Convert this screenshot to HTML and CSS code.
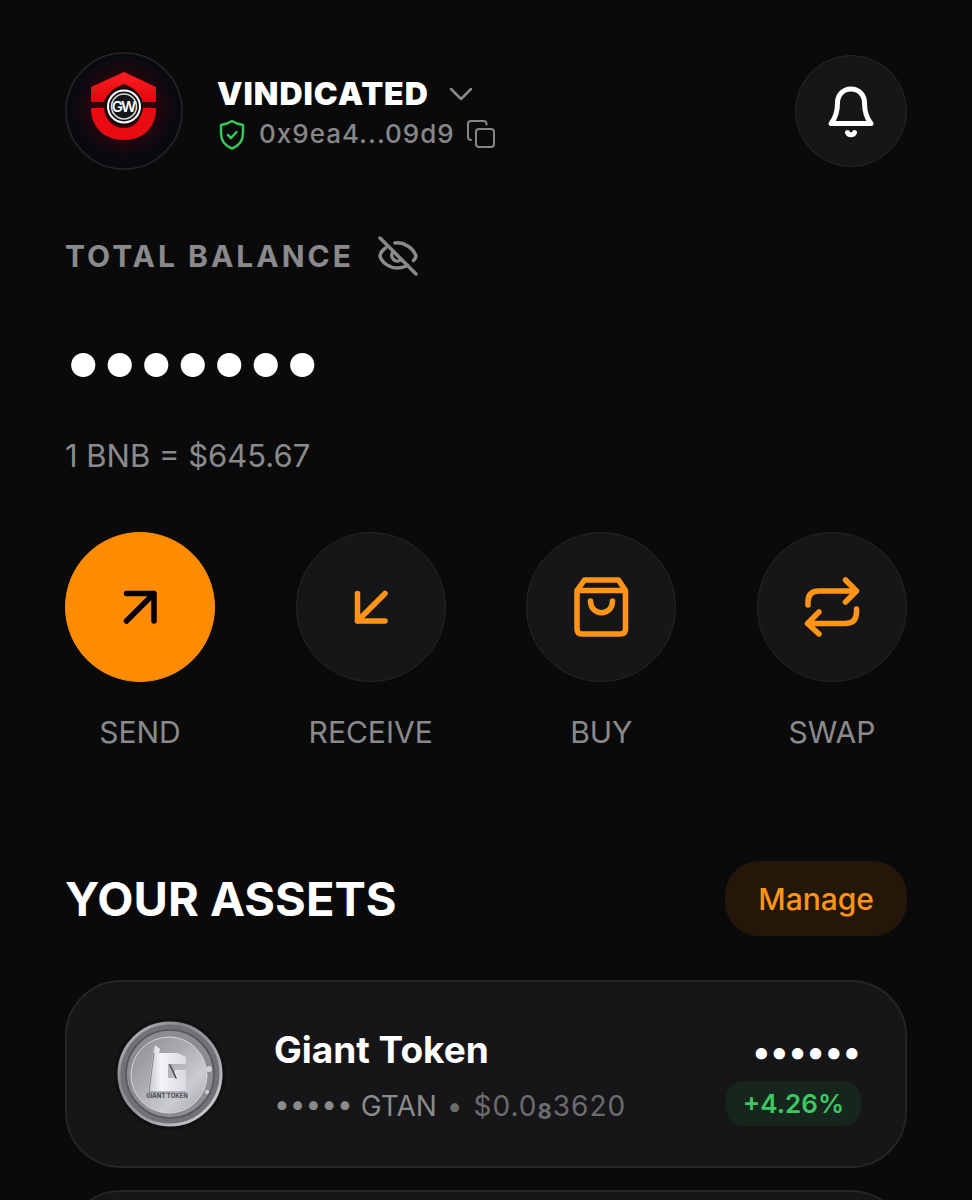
FILE: index.html
```html
<!DOCTYPE html>
<html lang="en">
<head>
  <meta charset="UTF-8" />
  <meta name="viewport" content="width=device-width, initial-scale=1.0" />
  <title>Wallet</title>
  <link rel="stylesheet" href="styles.css">
</head>
<body>
  <header class="topbar">
    <svg class="avatar" viewBox="0 0 118 118" role="img" aria-label="Avatar">
      <defs>
        <radialGradient id="avatar-glow">
          <stop offset="0" stop-color="#5c050c" />
          <stop offset=".55" stop-color="#28060d" />
          <stop offset="1" stop-color="#0a0910" />
        </radialGradient>
        <linearGradient id="avatar-red" x1="0" y1="0" x2="0" y2="1">
          <stop offset="0" stop-color="#ff1d1f" />
          <stop offset="1" stop-color="#dc080e" />
        </linearGradient>
      </defs>
      <circle cx="59" cy="59" r="58" fill="#0a0910" stroke="#27272a" stroke-width="1.5" />
      <circle cx="59" cy="55" r="51" fill="url(#avatar-glow)" />
      <path d="M26 35L59 20L91 35V50H77C76 43 70 36 59 32C48 36 41 43 39 50H26Z" fill="url(#avatar-red)" />
      <path d="M26 56H39C40 68 48 76 59 76S76 68 77 56H91C91 76 78 88 59 88S26 76 26 56Z" fill="#e80b12" />
      <circle cx="59" cy="54.500" r="19" fill="#10080d" />
      <circle cx="59" cy="54.500" r="16" fill="#15151a" stroke="#fff" stroke-width="2" />
      <circle cx="59" cy="54.500" r="12.500" fill="none" stroke="#ddd" stroke-width="1.5" />
      <text class="avatar-text" x="58" y="60" text-anchor="middle">GW</text>
    </svg>

    <div class="account">
      <button class="account-name" type="button">
        VINDICATED
        <svg class="chevron" viewBox="0 0 24 24"><path d="M2 7l10 10 10-10" /></svg>
      </button>
      <div class="address">
        <svg class="shield" viewBox="0 0 30 32">
          <path d="M15 3C12 5 8 6.500 4 7V15C4 22.500 8.500 28 15 30.500C21.500 28 26 22.500 26 15V7C22 6.500 18 5 15 3Z" />
          <path d="M11 17l3 3 5.500-6" />
        </svg>
        <span>0x9ea4...09d9</span>
        <button class="icon-btn" type="button" aria-label="Copy address">
          <svg class="copy" viewBox="0 0 28 28">
            <rect x="9" y="9" width="18" height="18" rx="3" />
            <path d="M19.500 4.500V4Q19.500 1 16.500 1H4Q1 1 1 4V17Q1 20 4 20" />
          </svg>
        </button>
      </div>
    </div>

    <button class="bell" type="button" aria-label="Notifications">
      <svg viewBox="0 0 56 56">
        <path d="M28 6C20 6 14.500 12 14.500 20C14.500 29 12.500 35 8 40.500H48C43.500 35 41.500 29 41.500 20C41.500 12 36 6 28 6Z" />
        <path d="M24.500 49.500c1 3 6 3 7 0" />
      </svg>
    </button>
  </header>

  <main>
    <section class="balance">
      <div class="balance-label">
        <h2>TOTAL BALANCE</h2>
        <button class="icon-btn" type="button" aria-label="Show balance">
          <svg class="eye" viewBox="0 0 40 40">
            <path d="M2 2l36 36" />
            <path d="M7.500 12C4.500 14 2.500 17 2 20C4 27 11.500 32 19.500 32C23 32 26.500 31 29.500 29.500" />
            <path d="M17 7C26 6 35 11.500 38 20C38 21.500 36.500 23.500 35.500 24.500" />
            <path d="M15.500 15.500C13 18 13.500 21.500 15.500 23.500C17.500 25.500 21 25.500 23.500 23.500" />
          </svg>
        </button>
      </div>
      <div class="amount">•••••••</div>
      <div class="rate">1 BNB = $645.67</div>
    </section>

    <nav class="actions">
      <button class="action primary" type="button">
        <span class="circle">
          <svg class="arrow" viewBox="0 0 40 40"><path d="M6.500 6.500H34V34M34 6.500L6.500 34" /></svg>
        </span>
        SEND
      </button>
      <button class="action" type="button">
        <span class="circle">
          <svg class="arrow" viewBox="0 0 40 40"><path d="M6.500 6.500V34H34M6.500 34L34 6.500" /></svg>
        </span>
        RECEIVE
      </button>
      <button class="action" type="button">
        <span class="circle">
          <svg viewBox="0 0 60 60">
            <path d="M13.500 3H47.500L54.500 13.500V52Q54.500 57 49.500 57H11Q6 57 6 52V13.500ZM6 13.500H54.500" />
            <path d="M19.500 24C19.500 39.500 41.500 39.500 41.500 24" />
          </svg>
        </span>
        BUY
      </button>
      <button class="action" type="button">
        <span class="circle">
          <svg viewBox="0 0 60 60">
            <path d="M43.500 3L54.500 14L43.500 25M54 14H17Q6 14 6 25V28" />
            <path d="M17 35L5.500 46.500L17 57M6 46.500H43Q54.500 46.500 54.500 35V32" />
          </svg>
        </span>
        SWAP
      </button>
    </nav>

    <section class="assets">
      <div class="assets-head">
        <h1>YOUR ASSETS</h1>
        <button class="manage" type="button">Manage</button>
      </div>

      <div class="card">
        <svg class="coin" viewBox="0 0 112 112" role="img" aria-label="Giant Token">
          <defs>
            <linearGradient id="coin-rim" x1="0" y1="0" x2="1" y2="1">
              <stop offset="0" stop-color="#c9cacc" />
              <stop offset=".3" stop-color="#85878a" />
              <stop offset=".65" stop-color="#a4a6a9" />
              <stop offset="1" stop-color="#dcddde" />
            </linearGradient>
            <linearGradient id="coin-face" x1="0" y1="0" x2="1" y2="1">
              <stop offset="0" stop-color="#8b8d91" />
              <stop offset=".4" stop-color="#a9abaf" />
              <stop offset=".7" stop-color="#cbccd1" />
              <stop offset="1" stop-color="#a2a4a8" />
            </linearGradient>
            <linearGradient id="coin-letter" x1="0" y1="0" x2="1" y2="0">
              <stop offset="0" stop-color="#c4c6ca" />
              <stop offset=".35" stop-color="#f3f4f7" />
              <stop offset="1" stop-color="#d8dadf" />
            </linearGradient>
          </defs>
          <circle cx="56" cy="56" r="56" fill="#111113" />
          <circle cx="56" cy="56" r="51" fill="#707276" stroke="url(#coin-rim)" stroke-width="3" />
          <circle cx="56" cy="56" r="44" fill="#8b8d91" stroke="#55575a" stroke-width="1.5" />
          <circle cx="55" cy="57" r="38" fill="url(#coin-face)" stroke="#d5d6d8" stroke-width="1" />
          <path d="M41 27L46 31L45 35H64L72 39V46H54V60H61V52H72V74H34L39 36Z" fill="url(#coin-letter)" />
          <path d="M56 47L62 60" stroke="#46484b" stroke-width="1.500" />
          <path d="M40 35L35 74H72" fill="none" stroke="#7e8084" stroke-width="1" />
          <text class="coin-text" x="53" y="80" text-anchor="middle">GIANT TOKEN</text>
          <circle cx="95" cy="51" r="3" fill="#cfd0d3" />
          <circle cx="93" cy="74" r="2" fill="#cfd0d3" />
        </svg>
        <div class="asset">
          <h3>Giant Token</h3>
          <div class="asset-meta">
            <span>••••• GTAN</span>
            <span class="price">•</span>
            <span class="price">$0.0<sub>8</sub>3620</span>
          </div>
        </div>
        <div class="value">
          <div class="value-hidden">••••••</div>
          <div class="change">+4.26%</div>
        </div>
      </div>

      <div class="card"></div>
    </section>
  </main>
</body>
</html>
```
FILE: styles.css
```css
* {
  box-sizing: border-box;
}

body {
  margin: 0;
  padding: 52px 65px 0;
  height: 100vh;
  overflow: hidden;
  background: #0a0a0a;
  color: #fff;
  font-family: Inter, "Liberation Sans", sans-serif;
}

h1,
h2,
h3 {
  margin: 0;
}

button {
  padding: 0;
  border: 0;
  background: none;
  color: inherit;
  font: inherit;
  cursor: pointer;
}

svg {
  display: block;
  flex: none;
  fill: none;
  stroke-linecap: round;
  stroke-linejoin: round;
}

/* header */
.topbar {
  display: flex;
  align-items: center;
}

.avatar {
  width: 118px;
  height: 118px;
}

.avatar-text {
  font-size: 15px;
  font-weight: 600;
  letter-spacing: -2px;
  fill: #fff;
}

.account {
  flex: 1;
  margin-left: 34px;
  padding-top: 6px;
}

.account-name {
  display: flex;
  align-items: center;
  gap: 20px;
  font-size: 32px;
  font-weight: 900;
  line-height: 40px;
  letter-spacing: 1px;
}

.chevron {
  width: 24px;
  stroke: #8a8a8d;
  stroke-width: 2.5;
}

.address {
  display: flex;
  align-items: center;
  gap: 12px;
  color: #87878a;
  font-size: 26px;
  font-weight: 500;
  line-height: 40px;
  letter-spacing: 1px;
}

.shield {
  width: 30px;
  stroke: #34c759;
  stroke-width: 2.5;
}

.copy {
  width: 28px;
  stroke: #87878a;
  stroke-width: 2;
}

.bell {
  display: flex;
  align-items: center;
  justify-content: center;
  width: 112px;
  height: 112px;
  border: 1px solid #262628;
  border-radius: 50%;
  background: #161618;
}

.bell svg {
  width: 56px;
  stroke: #fff;
  stroke-width: 5;
}

/* balance */
.balance {
  margin-top: 65px;
}

.balance-label {
  display: flex;
  align-items: center;
  gap: 24px;
  height: 42px;
  color: #8a8a8c;
}

.balance-label h2 {
  font-size: 30px;
  font-weight: 700;
  letter-spacing: 3px;
}

.eye {
  width: 40px;
  stroke: #8a8a8c;
  stroke-width: 3.5;
}

.amount {
  margin-top: 42px;
  font-size: 77px;
  font-weight: 700;
  line-height: 80px;
}

.rate {
  margin-top: 37px;
  color: #8a8a8c;
  font-size: 31px;
  line-height: 40px;
}

/* actions */
.actions {
  display: flex;
  justify-content: space-between;
  margin-top: 56px;
}

.action {
  display: flex;
  flex-direction: column;
  align-items: center;
  gap: 30px;
  width: 150px;
  color: #8a8a8c;
  font-size: 30px;
  line-height: 40px;
}

.circle {
  display: flex;
  align-items: center;
  justify-content: center;
  width: 150px;
  height: 150px;
  border: 1px solid #262628;
  border-radius: 50%;
  background: #161618;
}

.circle svg {
  width: 60px;
  stroke: #ff9416;
  stroke-width: 5.5;
}

.circle .arrow {
  width: 40px;
}

.primary .circle {
  border-color: #ff8c00;
  background: #ff8c00;
}

.primary .circle svg {
  stroke: #000;
}

/* assets */
.assets {
  margin-top: 109px;
}

.assets-head {
  display: flex;
  align-items: center;
  justify-content: space-between;
  margin-bottom: 44px;
}

.assets-head h1 {
  font-size: 47px;
  font-weight: 700;
}

.manage {
  height: 75px;
  padding: 0 33px;
  border-radius: 34px;
  background: #23170a;
  color: #ff9416;
  font-size: 30px;
  font-weight: 500;
}

.card {
  display: flex;
  align-items: center;
  height: 188px;
  margin-bottom: 22px;
  padding: 0 44px 0 47px;
  border: 2px solid #252527;
  border-radius: 56px;
  background: #161618;
}

.coin {
  width: 112px;
  height: 112px;
}

.coin-text {
  fill: #45474a;
  font-size: 6px;
  font-weight: 700;
}

.asset {
  flex: 1;
  margin-left: 48px;
  padding-top: 8px;
}

.asset h3 {
  font-size: 37px;
  font-weight: 700;
  line-height: 56px;
}

.asset-meta {
  display: flex;
  gap: 10px;
  color: #8a8a8c;
  font-size: 28px;
  line-height: 56px;
}

.price {
  color: #6c6c6f;
  letter-spacing: 1px;
}

.price sub {
  font-size: 22px;
  font-weight: 700;
  line-height: 1;
  vertical-align: -3px;
}

.value {
  display: flex;
  flex-direction: column;
  align-items: flex-end;
}

.value-hidden {
  font-size: 36px;
  font-weight: 600;
  line-height: 56px;
}

.change {
  margin-top: 2px;
  padding: 0 17px;
  border-radius: 18px;
  background: #17261c;
  color: #3cc864;
  font-size: 26px;
  font-weight: 600;
  line-height: 45px;
}
```
